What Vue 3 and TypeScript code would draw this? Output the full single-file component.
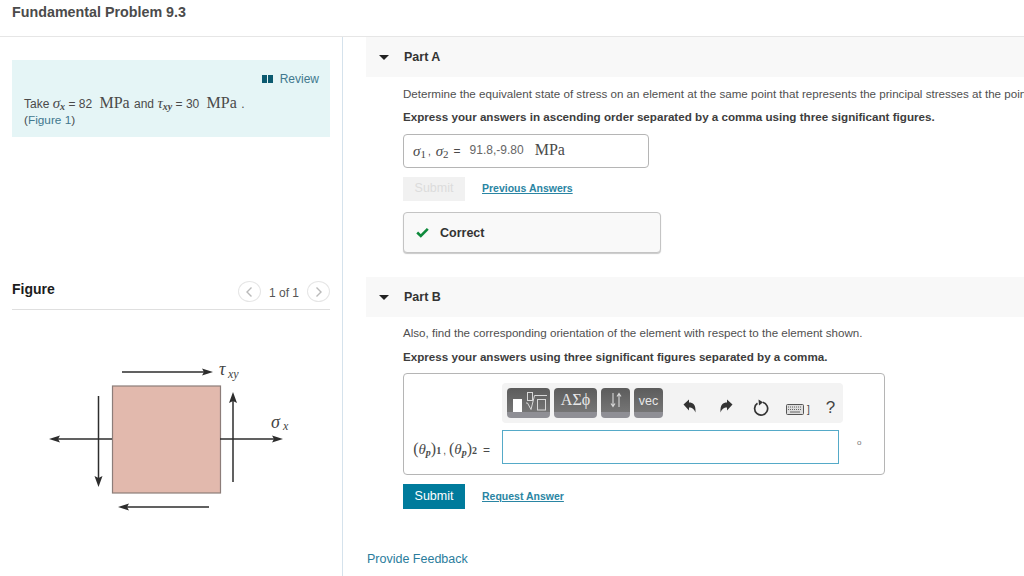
<template>
  <div class="page">
    <header class="page__title">Fundamental Problem 9.3</header>

    <div class="page__body">
      <aside class="side">
        <section class="intro">
          <div class="intro__review">
            <svg class="intro__book" viewBox="0 0 11 8" width="11" height="8">
              <rect x="0" y="0" width="5" height="8" fill="#0b5a70" />
              <rect x="6" y="0" width="5" height="8" fill="#0b5a70" />
            </svg>
            <span>Review</span>
          </div>
          <p class="intro__text">
            Take <i class="m">σ<sub>x</sub></i> = 82 <span class="unit">MPa</span> and
            <i class="m">τ<sub>xy</sub></i> = 30 <span class="unit">MPa</span> .
          </p>
          <p class="intro__link">(<span class="link">Figure 1</span>)</p>
        </section>

        <div class="fig-head">
          <span class="fig-head__title">Figure</span>
          <div class="pager">
            <span class="pager__btn">
              <svg viewBox="0 0 8 12" width="8" height="12"><path d="M6.500 1.500 2 6l4.500 4.500" /></svg>
            </span>
            <span class="pager__count">1 of 1</span>
            <span class="pager__btn">
              <svg viewBox="0 0 8 12" width="8" height="12"><path d="M1.500 1.500 6 6l-4.500 4.500" /></svg>
            </span>
          </div>
        </div>

        <svg class="diagram" viewBox="12 350 318 170" width="318" height="170">
          <rect x="112.500" y="386" width="108" height="107" fill="#e2b9ad" stroke="#8c7d79" stroke-width="1.200" />
          <g stroke="#2d2d2d" stroke-width="1.300" fill="none">
            <path d="M122 372H204" />
            <path d="M233 482V400" stroke-width="1.500" />
            <path d="M98.500 396V478" stroke-width="1.500" />
            <path d="M58 439H112" stroke-width="1.500" />
            <path d="M220 439H274" stroke-width="1.500" />
            <path d="M127 507H209" stroke-width="1.500" />
          </g>
          <g fill="#2d2d2d">
            <path d="M213 372l-11-3.500 2 3.500-2 3.500z" />
            <path d="M233 392l-4 11 4-2 4 2z" />
            <path d="M98.500 487l-4-11 4 2 4-2z" />
            <path d="M49 439l11-3.500-2 3.500 2 3.500z" />
            <path d="M283 439l-11-3.500 2 3.500-2 3.500z" />
            <path d="M118 507l11-3.500-2 3.500 2 3.500z" />
          </g>
          <text x="219" y="375" class="diagram__label" font-size="18">τ</text>
          <text x="228" y="378" class="diagram__label" font-size="12">xy</text>
          <text x="271" y="428" class="diagram__label" font-size="18">σ</text>
          <text x="283" y="430" class="diagram__label" font-size="12">x</text>
        </svg>
      </aside>

      <main class="parts">
        <div class="part-bar">
          <span class="part-bar__caret"></span>
          <span class="part-bar__name">Part A</span>
        </div>
        <div class="part part--a">
          <p class="part__lead">Determine the equivalent state of stress on an element at the same point that represents the principal stresses at the point.</p>
          <p class="part__hint">Express your answers in ascending order separated by a comma using three significant figures.</p>
          <div class="answer">
            <i class="m m--lg">σ<sub class="up">1</sub></i><span class="comma">,</span><i class="m m--lg">σ<sub class="up">2</sub></i>
            <span class="answer__eq">=</span>
            <span class="answer__value">91.8,-9.80</span>
            <span class="unit unit--lg">MPa</span>
          </div>
          <div class="actions">
            <button class="btn btn--off">Submit</button>
            <span class="action-link">Previous Answers</span>
          </div>
          <div class="correct">
            <svg viewBox="0 0 13 11" width="13" height="11">
              <path d="M1.200 5.500 4.800 9 11.800 1.800" fill="none" stroke="#0f8a3c" stroke-width="2.600" />
            </svg>
            <span>Correct</span>
          </div>
        </div>

        <div class="part-bar part-bar--b">
          <span class="part-bar__caret"></span>
          <span class="part-bar__name">Part B</span>
        </div>
        <div class="part part--b">
          <p class="part__lead">Also, find the corresponding orientation of the element with respect to the element shown.</p>
          <p class="part__hint">Express your answers using three significant figures separated by a comma.</p>
          <div class="editor">
            <div class="toolbar">
              <span class="tool tool--templates">
                <span class="tool__block"></span>
                <svg viewBox="0 0 25 20" width="25" height="20">
                  <g fill="none" stroke="#d8d8d8" stroke-width="1">
                    <rect x="4.500" y="1.500" width="5" height="8" />
                    <path d="M3 12h1.500L8 18.500 11.500 4.500H24" />
                    <rect x="14.500" y="8.500" width="8" height="10.500" />
                  </g>
                </svg>
              </span>
              <span class="tool tool--greek">ΑΣϕ</span>
              <span class="tool tool--arrows">
                <svg viewBox="0 0 14 16" width="14" height="16">
                  <path d="M4 1v13M2 11.500 4 14.500l2-3M10 15V2M8 4.500 10 1.500l2 3" fill="none" stroke="#d8d8d8" stroke-width="1.100" />
                </svg>
              </span>
              <span class="tool tool--vec">vec</span>
              <span class="tool-icon tool-icon--undo">
                <svg viewBox="0 0 14 14" width="14" height="14">
                  <path d="M.5 5.500 6 .5v3c4 0 7 2 6.500 10-1.500-3.500-3-5-6.500-5v3z" fill="#333" />
                </svg>
              </span>
              <span class="tool-icon tool-icon--redo">
                <svg viewBox="0 0 14 14" width="14" height="14">
                  <path d="M13.500 5.500 8 .5v3c-4 0-7 2-6.500 10 1.500-3.500 3-5 6.500-5v3z" fill="#333" />
                </svg>
              </span>
              <span class="tool-icon tool-icon--reset">
                <svg viewBox="0 0 16 17" width="16" height="17">
                  <path d="M9.800 3.300A6.500 6.500 0 1 1 4.500 4.200" fill="none" stroke="#333" stroke-width="1.700" />
                  <path d="M5.500 .5 10 3.200 6 6.500z" fill="#333" />
                </svg>
              </span>
              <span class="tool-icon tool-icon--keys">
                <svg viewBox="0 0 18 11" width="18" height="11">
                  <rect x=".5" y=".5" width="17" height="10" rx="1" fill="#ddd" stroke="#555" />
                  <path d="M2 3h14M2 5.500h14" stroke="#666" stroke-dasharray="1 1" />
                  <path d="M4 8h10" stroke="#666" />
                </svg>
                <span class="tool-icon__bracket">]</span>
              </span>
              <span class="tool-icon tool-icon--help">?</span>
            </div>
            <div class="editor__row">
              <span class="editor__label">
                <span class="paren">(</span><i class="m m--theta">θ<sub>p</sub></i><span class="paren">)</span><sub class="idx">1</sub>
                <span class="comma comma--theta">,</span>
                <span class="paren">(</span><i class="m m--theta">θ<sub>p</sub></i><span class="paren">)</span><sub class="idx">2</sub>
                <span class="editor__eq">=</span>
              </span>
              <div class="editor__input"></div>
              <span class="editor__deg">o</span>
            </div>
          </div>
          <div class="actions">
            <button class="btn">Submit</button>
            <span class="action-link">Request Answer</span>
          </div>
          <div class="feedback">Provide Feedback</div>
        </div>
      </main>
    </div>
  </div>
</template>

<script setup lang="ts">
defineOptions({ name: 'App' })
</script>

<style>
html,
body {
  margin: 0;
  overflow: hidden;
  background: #fff;
}
</style>

<style scoped>
.page {
  width: 1024px;
  height: 576px;
  overflow: hidden;
  font-family: 'Liberation Sans', Arial, sans-serif;
  font-size: 12px;
  color: #4a4a4a;
}

.page__title {
  box-sizing: border-box;
  height: 37px;
  padding: 3px 12px 0;
  border-bottom: 1px solid #e6e6e6;
  font-size: 14.300px;
  line-height: 18px;
  font-weight: 700;
  color: #4b4b4b;
}

.page__body {
  display: grid;
  grid-template-columns: 343px minmax(0, 1fr);
  height: 539px;
}

.side {
  box-sizing: border-box;
  border-right: 1px solid #d5e2ec;
  padding: 23px 12px 0;
}

.intro {
  box-sizing: border-box;
  height: 77px;
  padding: 12px 11px 0 12px;
  background: #e5f5f6;
}

.intro__review {
  display: flex;
  justify-content: flex-end;
  align-items: center;
  gap: 7px;
  height: 14px;
  color: #41788e;
  font-size: 12px;
}

.intro__text {
  margin: 8px 0 0;
  line-height: 17px;
  white-space: nowrap;
  font-size: 12px;
}

.intro__link {
  margin: -1px 0 0;
  line-height: 16px;
  font-size: 11.800px;
}

.link {
  color: #41788e;
}

.m {
  font-family: 'Liberation Serif', serif;
  font-style: italic;
  font-size: 15px;
}

.m sub {
  font-size: 10px;
  line-height: 0;
  font-weight: 700;
  vertical-align: -2px;
}

.m sub.up {
  font-size: 11px;
  font-style: normal;
  font-weight: 400;
}

.unit {
  margin: 0 1px 0 4px;
  font-family: 'Liberation Serif', serif;
  font-size: 16px;
}

.fig-head {
  display: flex;
  justify-content: space-between;
  align-items: center;
  box-sizing: border-box;
  height: 32px;
  margin-top: 141px;
  border-bottom: 1px solid #dfdfdf;
  padding-bottom: 10px;
}

.fig-head__title {
  font-size: 14px;
  font-weight: 700;
  color: #1c1c1c;
}

.pager {
  display: flex;
  align-items: center;
  gap: 8px;
  margin-top: 6px;
}

.pager__btn {
  display: flex;
  align-items: center;
  justify-content: center;
  box-sizing: border-box;
  width: 23px;
  height: 21px;
  border: 1px solid #e6e6e6;
  border-radius: 50%;
}

.pager__btn path {
  fill: none;
  stroke: #b9b9b9;
  stroke-width: 1.400;
}

.pager__count {
  margin-top: 2px;
  font-size: 12px;
  color: #555;
}

.diagram {
  display: block;
  margin-top: 40px;
}

.diagram__label {
  font-family: 'Liberation Serif', serif;
  font-style: italic;
  fill: #444;
}

.parts {
  min-width: 0;
  padding-left: 23px;
}

.part-bar {
  display: flex;
  align-items: center;
  height: 40px;
  background: #f8f8f8;
}

.part-bar--b {
  margin-top: 24px;
}

.part-bar__caret {
  width: 0;
  height: 0;
  margin-left: 13px;
  margin-right: 15px;
  border-left: 5px solid transparent;
  border-right: 5px solid transparent;
  border-top: 5px solid #222;
}

.part-bar__name {
  font-size: 12.500px;
  font-weight: 700;
  color: #333;
}

.part {
  padding-left: 37px;
}

.part__lead {
  margin: 0;
  line-height: 15px;
  white-space: nowrap;
  font-size: 11.600px;
  color: #4f4f4f;
}

.part__hint {
  margin: 0;
  line-height: 15px;
  white-space: nowrap;
  font-size: 11.640px;
  font-weight: 700;
  color: #3d3d3d;
}

.part--a .part__lead {
  margin-top: 9px;
}

.part--a .part__hint {
  margin-top: 8px;
}

.part--b .part__lead {
  margin-top: 8px;
}

.part--b .part__hint {
  margin-top: 9px;
}

.answer {
  display: flex;
  align-items: center;
  box-sizing: border-box;
  width: 246px;
  height: 34px;
  margin-top: 10px;
  padding-left: 9px;
  border: 1px solid #b5b5b5;
  border-radius: 4px;
}

.comma {
  margin: 0 5px 0 2px;
  font-size: 10px;
}

.answer__eq {
  margin: 0 9px 0 5px;
}

.answer__value {
  font-size: 12px;
  color: #666;
  margin-top: -2px;
}

.unit--lg {
  margin-left: 11px;
  margin-top: -2px;
}

.actions {
  display: flex;
  align-items: center;
  gap: 17px;
  margin-top: 9px;
}

.btn {
  box-sizing: border-box;
  width: 62px;
  height: 25px;
  padding: 0 0 2px;
  border: 0;
  background: #007b9c;
  color: #fff;
  font-family: inherit;
  font-size: 12.500px;
}

.btn--off {
  height: 24px;
  background: #f1f1f1;
  color: #dcdcdc;
}

.action-link {
  margin-bottom: 2px;
  font-size: 10.500px;
  font-weight: 700;
  color: #2a85a3;
  text-decoration: underline;
}

.correct {
  display: flex;
  align-items: center;
  gap: 11px;
  box-sizing: border-box;
  width: 258px;
  height: 41px;
  margin-top: 11px;
  padding-left: 12px;
  border: 1px solid #c4c4c4;
  border-radius: 4px;
  background: #f9f9f9;
  box-shadow: 0 1px 1px #c9c9c9;
  font-size: 12.500px;
  font-weight: 700;
  color: #333;
}

.editor {
  box-sizing: border-box;
  width: 482px;
  height: 102px;
  margin-top: 9px;
  padding: 9px 0 0 98px;
  border: 1px solid #b5b5b5;
  border-radius: 4px;
}

.toolbar {
  display: flex;
  align-items: center;
  gap: 4px;
  box-sizing: border-box;
  width: 341px;
  height: 40px;
  padding: 0 5px;
  border-radius: 4px;
  background: #f3f3f3;
}

.tool {
  display: flex;
  align-items: center;
  justify-content: center;
  box-sizing: border-box;
  height: 30px;
  padding-bottom: 6px;
  border-radius: 4px;
  background: linear-gradient(#5c5c5c 0, #757575 24px, #8f8f95 24px, #8f8f95 100%);
  color: #e8e8e8;
}

.tool--templates {
  width: 43px;
  gap: 1px;
  padding: 0 0 5px 3px;
}

.tool__block {
  width: 9px;
  height: 13px;
  margin-top: 9px;
  background: #fff;
}

.tool--greek {
  width: 43px;
  padding-bottom: 7px;
  font-family: 'Liberation Serif', serif;
  font-size: 16px;
}

.tool--arrows {
  width: 29px;
}

.tool--vec {
  width: 29px;
  padding-bottom: 5px;
  font-size: 12.500px;
}

.tool-icon {
  display: flex;
  align-items: center;
  justify-content: center;
  color: #444;
}

.tool-icon--undo {
  margin-left: 16px;
  margin-top: 6px;
}

.tool-icon--redo {
  margin-left: 18px;
  margin-top: 6px;
}

.tool-icon--reset {
  margin-left: 16px;
  margin-top: 9px;
}

.tool-icon--keys {
  gap: 3px;
  margin-left: 13px;
  margin-top: 13px;
}

.tool-icon__bracket {
  font-size: 10px;
}

.tool-icon--help {
  margin-left: 12px;
  margin-top: 10px;
  font-size: 17px;
}

.editor__row {
  position: relative;
  margin-top: 7px;
}

.editor__label {
  position: absolute;
  top: 10px;
  right: 100%;
  margin-right: 12px;
  display: flex;
  align-items: baseline;
  white-space: nowrap;
}

.paren {
  font-family: 'Liberation Serif', serif;
  font-size: 16px;
}

.comma--theta {
  margin: 0 3px 0 2px;
}

.idx {
  font-family: 'Liberation Serif', serif;
  font-size: 10px;
  font-weight: 700;
  line-height: 0;
  vertical-align: -3px;
}

.editor__eq {
  margin-left: 6px;
}

.editor__input {
  box-sizing: border-box;
  width: 337px;
  height: 34px;
  border: 1.500px solid #55aac8;
}

.editor__deg {
  position: absolute;
  top: 8px;
  left: 355px;
  font-size: 8px;
  color: #777;
}

.feedback {
  margin: 43px 0 0 -36px;
  font-size: 12.500px;
  color: #2a7c9c;
}
</style>
